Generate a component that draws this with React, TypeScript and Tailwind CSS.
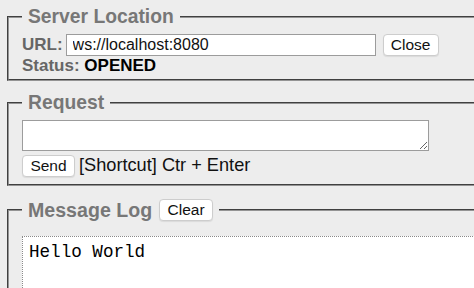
import React from 'react';

const btn =
  'h-[22px] rounded-[4px] border border-[#cdcdcd] bg-white text-[15.5px] leading-none text-[#111] shadow-[0_1px_1px_rgba(0,0,0,0.08)]';

const App: React.FC = () => {
  return (
    <div className="h-[288px] w-[474px] overflow-hidden bg-[#ededed] font-['Liberation_Sans',Arial,sans-serif]">
      <div className="w-[560px] pl-[7px] pt-[6px]">
        {/* Server Location */}
        <fieldset className="m-0 min-w-0 border-2 border-[#949494] [border-style:groove] px-[13px] pb-[3px] pt-[5px]">
          <legend className="px-[6px] text-[19.3px] font-bold leading-[22px] text-[#777]">Server Location</legend>
          <div className="flex h-[24px] items-center">
            <span className="text-[17px] font-bold text-[#666]">URL:</span>
            <input
              className="ml-[3px] h-[22px] w-[310px] border border-[#9c9c9c] bg-white px-[6px] text-[16px] text-[#111] outline-none"
              defaultValue="ws://localhost:8080"
            />
            <button className={`${btn} ml-[7px] w-[56px]`}>Close</button>
          </div>
          <div className="h-[19px] text-[17px] font-bold leading-[18px]">
            <span className="text-[#666]">Status: </span>
            <span className="text-black">OPENED</span>
          </div>
        </fieldset>

        {/* Request */}
        <fieldset className="m-0 mt-[11px] min-w-0 border-2 border-[#949494] [border-style:groove] px-[13px] pb-[7px] pt-[6px]">
          <legend className="px-[6px] text-[19.3px] font-bold leading-[22px] text-[#777]">Request</legend>
          <textarea className="block h-[31px] w-[407px] resize border border-[#9c9c9c] bg-white outline-none" />
          <div className="mt-[3px] flex h-[23px] items-center">
            <button className={`${btn} w-[53px]`}>Send</button>
            <span className="ml-[4px] text-[18.2px] text-[#111]">[Shortcut] Ctr + Enter</span>
          </div>
        </fieldset>

        {/* Message Log */}
        <fieldset className="m-0 mt-[13px] min-w-0 border-2 border-[#949494] [border-style:groove] px-[13px] pt-[15px]">
          <legend className="px-[6px]">
            <div className="flex items-center gap-[7px]">
              <span className="text-[19.6px] font-bold leading-[22px] text-[#777]">Message Log</span>
              <button className={`${btn} w-[54px]`}>Clear</button>
            </div>
          </legend>
          <div className="h-[80px] border border-dotted border-[#8a8a8a] bg-white px-[6px] pt-[5px] font-['Liberation_Mono','Courier_New',monospace] text-[17.6px] leading-[20px] text-black">
            Hello World
          </div>
        </fieldset>
      </div>
    </div>
  );
};

export default App;
